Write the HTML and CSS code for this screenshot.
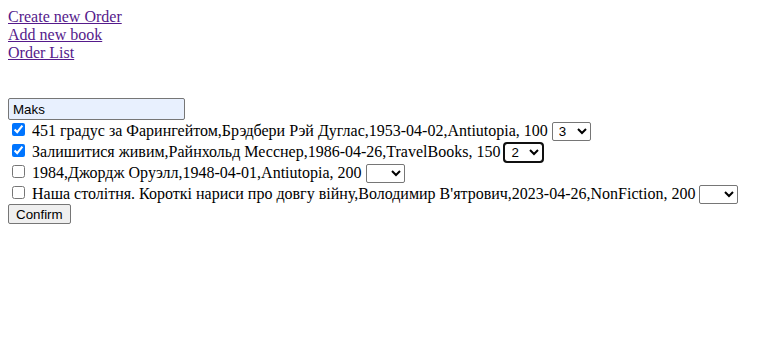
FILE: index.html
```html
<!DOCTYPE html>
<html lang="uk">
<head>
    <meta charset="UTF-8">
    <meta name="viewport" content="width=device-width, initial-scale=1.0">
    <title>Order</title>
    <link rel="stylesheet" href="styles.css">
</head>
<body>
    <a href="#">Create new Order</a><br>
    <a href="#">Add new book</a><br>
    <a href="#">Order List</a><br>
    <br>
    <br>
    <form class="order-form">
        <input type="text" class="name-input" value="Maks"><br>
        <label><input type="checkbox" checked> 451 градус за Фарингейтом,Брэдбери Рэй Дуглас,1953-04-02,Antiutopia, 100</label>
        <select class="qty"><option></option><option>1</option><option>2</option><option selected>3</option></select><br>
        <label><input type="checkbox" checked> Залишитися живим,Райнхольд Месснер,1986-04-26,TravelBooks, 150</label>
        <select class="qty focused"><option></option><option>1</option><option selected>2</option><option>3</option></select><br>
        <label><input type="checkbox"> 1984,Джордж Оруэлл,1948-04-01,Antiutopia, 200</label>
        <select class="qty"><option></option><option>1</option><option>2</option><option>3</option></select><br>
        <label><input type="checkbox"> Наша столітня. Короткі нариси про довгу війну,Володимир В'ятрович,2023-04-26,NonFiction, 200</label>
        <select class="qty"><option></option><option>1</option><option>2</option><option>3</option></select><br>
        <button type="submit" class="confirm">Confirm</button>
    </form>
</body>
</html>
```
FILE: styles.css
```css
body {
    margin: 8px;
    font-family: 'Liberation Serif', 'Times New Roman', serif;
    font-size: 16px;
    background: #fff;
    color: #000;
}

a {
    color: #551a8b;
}

input, select, button {
    font-family: 'Liberation Sans', Arial, sans-serif;
    font-size: 13.33px;
}

.name-input {
    width: 177px;
    height: 22px;
    box-sizing: border-box;
    padding: 1px 4px;
    border: 1px solid #767676;
    border-radius: 2px;
    background-color: #e8f0fe;
    margin: 0;
    vertical-align: top;
}

input[type="checkbox"] {
    margin: 3px 3px 3px 4px;
    accent-color: #0075ff;
}

.qty {
    width: 39px;
    height: 19px;
    box-sizing: border-box;
    border: 1px solid #767676;
    border-radius: 2px;
    background: #fff;
    padding: 0 0 0 2px;
}

.focused {
    outline: 2px solid #101010;
    outline-offset: -1px;
    border-radius: 3px;
}

.confirm {
    height: 20px;
    padding: 1px 7px;
    border: 1px solid #767676;
    border-radius: 2px;
    background: #efefef;
    margin: 0;
}
```
